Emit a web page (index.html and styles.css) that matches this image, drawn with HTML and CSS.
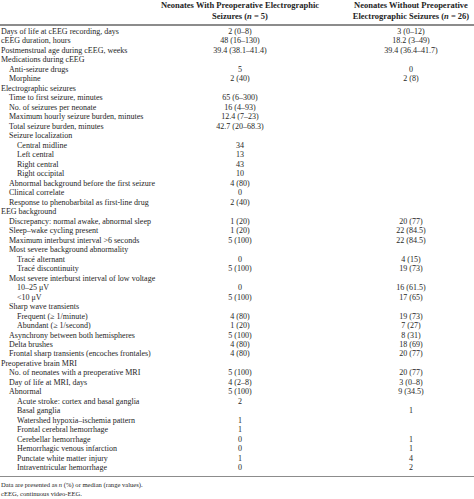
FILE: index.html
```html
<!DOCTYPE html>
<html>
<head>
<meta charset="utf-8">
<link rel="stylesheet" href="styles.css">
</head>
<body>
<div class="table">
  <div class="head">
    <div class="c1"></div>
    <div class="c2">Neonates With Preoperative Electrographic<br>Seizures (<i>n</i> = 5)</div>
    <div class="c3">Neonates Without Preoperative<br>Electrographic Seizures (<i>n</i> = 26)</div>
  </div>
  <div class="body">
    <div class="row"><div class="c1">Days of life at cEEG recording, days</div><div class="c2">2 (0–8)</div><div class="c3">3 (0–12)</div></div>
    <div class="row"><div class="c1">cEEG duration, hours</div><div class="c2">48 (16–130)</div><div class="c3">18.2 (3–49)</div></div>
    <div class="row"><div class="c1">Postmenstrual age during cEEG, weeks</div><div class="c2">39.4 (38.1–41.4)</div><div class="c3">39.4 (36.4–41.7)</div></div>
    <div class="row"><div class="c1">Medications during cEEG</div><div class="c2"></div><div class="c3"></div></div>
    <div class="row"><div class="c1 l1">Anti-seizure drugs</div><div class="c2">5</div><div class="c3">0</div></div>
    <div class="row"><div class="c1 l1">Morphine</div><div class="c2">2 (40)</div><div class="c3">2 (8)</div></div>
    <div class="row"><div class="c1">Electrographic seizures</div><div class="c2"></div><div class="c3"></div></div>
    <div class="row"><div class="c1 l1">Time to first seizure, minutes</div><div class="c2">65 (6–300)</div><div class="c3"></div></div>
    <div class="row"><div class="c1 l1">No. of seizures per neonate</div><div class="c2">16 (4–93)</div><div class="c3"></div></div>
    <div class="row"><div class="c1 l1">Maximum hourly seizure burden, minutes</div><div class="c2">12.4 (7–23)</div><div class="c3"></div></div>
    <div class="row"><div class="c1 l1">Total seizure burden, minutes</div><div class="c2">42.7 (20–68.3)</div><div class="c3"></div></div>
    <div class="row"><div class="c1 l1">Seizure localization</div><div class="c2"></div><div class="c3"></div></div>
    <div class="row"><div class="c1 l2">Central midline</div><div class="c2">34</div><div class="c3"></div></div>
    <div class="row"><div class="c1 l2">Left central</div><div class="c2">13</div><div class="c3"></div></div>
    <div class="row"><div class="c1 l2">Right central</div><div class="c2">43</div><div class="c3"></div></div>
    <div class="row"><div class="c1 l2">Right occipital</div><div class="c2">10</div><div class="c3"></div></div>
    <div class="row"><div class="c1 l1">Abnormal background before the first seizure</div><div class="c2">4 (80)</div><div class="c3"></div></div>
    <div class="row"><div class="c1 l1">Clinical correlate</div><div class="c2">0</div><div class="c3"></div></div>
    <div class="row"><div class="c1 l1">Response to phenobarbital as first-line drug</div><div class="c2">2 (40)</div><div class="c3"></div></div>
    <div class="row"><div class="c1">EEG background</div><div class="c2"></div><div class="c3"></div></div>
    <div class="row"><div class="c1 l1">Discrepancy: normal awake, abnormal sleep</div><div class="c2">1 (20)</div><div class="c3">20 (77)</div></div>
    <div class="row"><div class="c1 l1">Sleep–wake cycling present</div><div class="c2">1 (20)</div><div class="c3">22 (84.5)</div></div>
    <div class="row"><div class="c1 l1">Maximum interburst interval &gt;6 seconds</div><div class="c2">5 (100)</div><div class="c3">22 (84.5)</div></div>
    <div class="row"><div class="c1 l1">Most severe background abnormality</div><div class="c2"></div><div class="c3"></div></div>
    <div class="row"><div class="c1 l2">Tracé alternant</div><div class="c2">0</div><div class="c3">4 (15)</div></div>
    <div class="row"><div class="c1 l2">Tracé discontinuity</div><div class="c2">5 (100)</div><div class="c3">19 (73)</div></div>
    <div class="row"><div class="c1 l1">Most severe interburst interval of low voltage</div><div class="c2"></div><div class="c3"></div></div>
    <div class="row"><div class="c1 l2">10–25 μV</div><div class="c2">0</div><div class="c3">16 (61.5)</div></div>
    <div class="row"><div class="c1 l2">&lt;10 μV</div><div class="c2">5 (100)</div><div class="c3">17 (65)</div></div>
    <div class="row"><div class="c1 l1">Sharp wave transients</div><div class="c2"></div><div class="c3"></div></div>
    <div class="row"><div class="c1 l2">Frequent (≥ 1/minute)</div><div class="c2">4 (80)</div><div class="c3">19 (73)</div></div>
    <div class="row"><div class="c1 l2">Abundant (≥ 1/second)</div><div class="c2">1 (20)</div><div class="c3">7 (27)</div></div>
    <div class="row"><div class="c1 l1">Asynchrony between both hemispheres</div><div class="c2">5 (100)</div><div class="c3">8 (31)</div></div>
    <div class="row"><div class="c1 l1">Delta brushes</div><div class="c2">4 (80)</div><div class="c3">18 (69)</div></div>
    <div class="row"><div class="c1 l1">Frontal sharp transients (encoches frontales)</div><div class="c2">4 (80)</div><div class="c3">20 (77)</div></div>
    <div class="row"><div class="c1">Preoperative brain MRI</div><div class="c2"></div><div class="c3"></div></div>
    <div class="row"><div class="c1 l1">No. of neonates with a preoperative MRI</div><div class="c2">5 (100)</div><div class="c3">20 (77)</div></div>
    <div class="row"><div class="c1 l1">Day of life at MRI, days</div><div class="c2">4 (2–8)</div><div class="c3">3 (0–8)</div></div>
    <div class="row"><div class="c1 l1">Abnormal</div><div class="c2">5 (100)</div><div class="c3">9 (34.5)</div></div>
    <div class="row"><div class="c1 l2">Acute stroke: cortex and basal ganglia</div><div class="c2">2</div><div class="c3"></div></div>
    <div class="row"><div class="c1 l2">Basal ganglia</div><div class="c2"></div><div class="c3">1</div></div>
    <div class="row"><div class="c1 l2">Watershed hypoxia–ischemia pattern</div><div class="c2">1</div><div class="c3"></div></div>
    <div class="row"><div class="c1 l2">Frontal cerebral hemorrhage</div><div class="c2">1</div><div class="c3"></div></div>
    <div class="row"><div class="c1 l2">Cerebellar hemorrhage</div><div class="c2">0</div><div class="c3">1</div></div>
    <div class="row"><div class="c1 l2">Hemorrhagic venous infarction</div><div class="c2">0</div><div class="c3">1</div></div>
    <div class="row"><div class="c1 l2">Punctate white matter injury</div><div class="c2">1</div><div class="c3">4</div></div>
    <div class="row"><div class="c1 l2">Intraventricular hemorrhage</div><div class="c2">0</div><div class="c3">2</div></div>
  </div>
  <div class="notes">
    <div>Data are presented as <i>n</i> (%) or median (range values).</div>
    <div>cEEG, continuous video-EEG.</div>
  </div>
</div>
</body>
</html>
```

FILE: styles.css
```css
html, body {
  margin: 0;
  padding: 0;
  background: #ffffff;
}
body {
  font-family: "Liberation Serif", "Times New Roman", serif;
  color: #1e1e1e;
  width: 474px;
  overflow: hidden;
}
.table {
  display: flex;
  flex-direction: column;
}
.head, .row {
  display: grid;
  grid-template-columns: 132px 216px 126px;
  white-space: nowrap;
}
.head {
  font-weight: bold;
  font-size: 8.5px;
  line-height: 10.5px;
  padding-bottom: 3px;
  border-bottom: 2px solid #8c8c8c;
}
.head .c2, .head .c3 {
  text-align: center;
}
.body {
  padding-top: 1px;
  padding-bottom: 3px;
  border-bottom: 1.5px solid #8c8c8c;
  font-size: 8px;
  line-height: 9.48px;
}
.c1 {
  padding-left: 1px;
}
.c1.l1 {
  padding-left: 9px;
}
.c1.l2 {
  padding-left: 17px;
}
.row .c2, .row .c3 {
  text-align: center;
}
.notes {
  font-size: 6.6px;
  line-height: 9px;
  padding-top: 3px;
  padding-left: 1px;
}
```
